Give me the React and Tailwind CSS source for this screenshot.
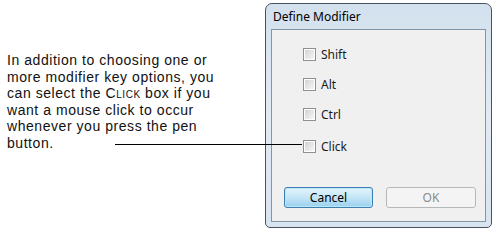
import React from "react";

const uiFont = { fontFamily: '"Noto Sans", "Open Sans", sans-serif' };

function Check({ label, className = "" }) {
  return (
    <label className={`flex items-center gap-[5px] text-[12px] leading-[13px] text-[#1b1b1b] ${className}`}>
      <span className="h-[13px] w-[13px] border border-[#8f8f8f] bg-white p-[1px]">
        <span className="block h-full w-full bg-gradient-to-br from-[#d4d4d4] to-[#f6f6f6]" />
      </span>
      <span>{label}</span>
    </label>
  );
}

export default function App() {
  return (
    <div className="relative flex h-[231px] w-[499px] overflow-hidden bg-white">
      <div className="w-[257px] shrink-0 pl-[7px] pt-[52px]">
        <p
          className="w-[228px] text-[14px] leading-[16.6px] tracking-[0.55px] text-[#111]"
          style={{ fontFamily: '"Liberation Sans", Arial, sans-serif' }}
        >
          In addition to choosing one or more modifier key options, you can select the{" "}
          <span className="[font-variant:small-caps]">Click</span> box if you want a mouse click to occur
          whenever you press the pen button.
        </p>
      </div>

      <div
        className="mt-[3px] ml-[8px] flex h-[225px] w-[227px] flex-col rounded-t-[7px] rounded-b-[5px] border border-[#48535f] bg-gradient-to-b from-[#d3e1ee] via-[#e2ebf4] to-[#d8e4f0] px-[5px] pb-[5px]"
        style={uiFont}
      >
        <div className="flex h-[25px] items-center pl-[2px] pt-[1px] text-[12px] text-black">Define Modifier</div>
        <div className="flex flex-1 flex-col border border-[#8495a6] bg-[#f0f0f0]">
          <div className="flex flex-col pl-[31px] pt-[18px]">
            <Check label="Shift" />
            <Check label="Alt" className="mt-[17px]" />
            <Check label="Ctrl" className="mt-[17px]" />
            <Check label="Click" className="mt-[19px]" />
          </div>
          <div className="mt-auto mb-[13px] flex gap-[13px] pl-[12px]">
            <button className="h-[21px] w-[89px] rounded-[3px] border border-[#3c7fb1] bg-gradient-to-b from-[#e5f4fc] via-[#c4e5f6] to-[#98d1ef] text-[12px] text-black shadow-[inset_0_0_0_1px_#bfe6f8]">
              Cancel
            </button>
            <button className="h-[21px] w-[90px] rounded-[3px] border border-[#b5b8ba] bg-[#f4f4f4] text-[12px] text-[#8a8a8a]">
              OK
            </button>
          </div>
        </div>
      </div>

      <div className="absolute left-[115px] top-[144px] h-px w-[187px] bg-black" />
    </div>
  );
}
